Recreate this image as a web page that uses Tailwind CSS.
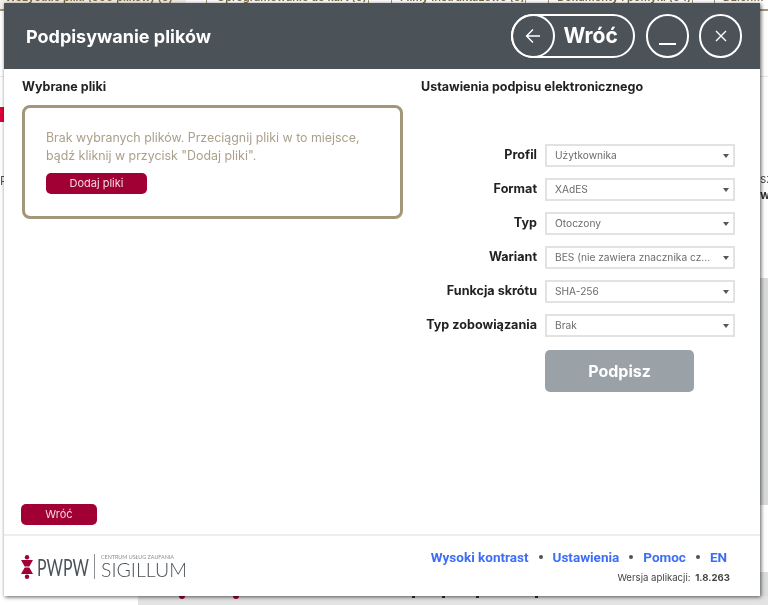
<!DOCTYPE html>
<html lang="pl">
<head>
<meta charset="utf-8">
<script src="https://cdn.jsdelivr.net/npm/@tailwindcss/browser@4"></script>
</head>
<body class="bg-white">
<div class="relative w-[768px] h-[605px] overflow-hidden bg-white font-['Inter',sans-serif] blur-[0.35px]">
  <!-- page behind the dialog -->
  <div class="absolute left-0 top-0 w-full h-[11px] border-b-2 border-[#a39779] flex text-[11px] leading-[11px] text-[#7a6a45] font-semibold overflow-hidden">
    <span class="w-[190px] pl-[5px] pt-[0px] -mt-[8px] h-[30px] bg-[#f3f0e8] truncate">Wszystkie pliki (000 plików) (0)</span>
    <span class="ml-[20px] w-[167px] pl-[10px] -mt-[8px] h-[30px] border-x border-[#a39779] truncate">Oprogramowanie do kart (0)</span>
    <span class="ml-[22px] w-[138px] pl-[8px] -mt-[8px] h-[30px] border-x border-[#a39779] truncate">Filmy instruktażowe (0)</span>
    <span class="ml-[22px] w-[148px] pl-[8px] -mt-[8px] h-[30px] border-x border-[#a39779] truncate">Dokumenty i pomyki (04)</span>
    <span class="ml-[21px] pl-[8px] -mt-[8px] h-[30px] border-l border-[#a39779] truncate">Dziennik</span>
  </div>
  <div class="absolute left-0 top-[76px] w-full h-px bg-[#e8e8e8]"></div>
  <div class="absolute left-0 top-[107px] w-[4px] h-[15px] bg-[#e0003c]"></div>
  <div class="absolute left-0 top-[172px] text-[12px] text-[#555]">P</div>
  <div class="absolute left-[760px] top-[170px] text-[12px] text-[#555]">sz</div>
  <div class="absolute left-[760px] top-[186px] text-[12px] font-bold text-[#333]">ws</div>
  <div class="absolute left-[760px] top-[278px] w-[8px] h-[227px] bg-[#d8dada]"></div>
  <div class="absolute left-[760px] top-[572px] w-[8px] h-[33px] bg-[#dcdddd]"></div>
  <div class="absolute left-[138px] top-[596px] w-[630px] h-[9px] bg-[#e3e3e3]">
    <span class="absolute left-[41px] top-[-1px] w-[6px] h-[4px] rounded-b-full bg-[#a10035]"></span>
    <span class="absolute left-[95px] top-[-1px] w-[6px] h-[4px] rounded-b-full bg-[#a10035]"></span>
    <span class="absolute left-[274px] top-0 w-[3px] h-[2px] bg-[#333]"></span>
    <span class="absolute left-[304px] top-0 w-[3px] h-[2px] bg-[#333]"></span>
    <span class="absolute left-[338px] top-0 w-[3px] h-[2px] bg-[#333]"></span>
    <span class="absolute left-[397px] top-0 w-[3px] h-[2px] bg-[#333]"></span>
  </div>

  <!-- dialog -->
  <div class="absolute left-[4px] top-[3px] w-[756px] h-[593px] bg-white flex flex-col shadow-[1px_1px_4px_rgba(0,0,0,0.65)]">
    <header class="h-[66px] shrink-0 bg-[#4b5258] flex items-center pl-[22px] pr-[18px] text-white">
      <h1 class="text-[18px] font-bold flex-1">Podpisywanie plików</h1>
      <div class="w-[124px] h-[44px] rounded-full border-[2.5px] border-white flex items-center">
        <span class="w-[44px] h-[44px] -ml-[2.5px] rounded-full border-[2.5px] border-white flex items-center justify-center shrink-0">
          <svg width="16" height="16" viewBox="0 0 16 16" fill="none" stroke="white" stroke-width="1.4"><path d="M15 8H1.5M8 1.5 1.5 8 8 14.5"/></svg>
        </span>
        <span class="text-[21px] font-bold ml-[9px]">Wróć</span>
      </div>
      <div class="ml-[11px] w-[43px] h-[44px] rounded-full border-[2.5px] border-white flex items-center justify-center">
        <span class="w-[17px] h-[2px] bg-white mt-[16px]"></span>
      </div>
      <div class="ml-[10px] w-[43px] h-[44px] rounded-full border-[2.5px] border-white flex items-center justify-center">
        <svg width="14" height="14" viewBox="0 0 14 14" fill="none" stroke="white" stroke-width="1.4"><path d="M2 2l10 10M12 2 2 12"/></svg>
      </div>
    </header>

    <main class="flex-1 flex flex-col pl-[18px] pr-[25px]">
      <div class="flex flex-1">
        <section class="w-[381px] pt-[9px]">
          <h2 class="text-[12.5px] leading-[18px] font-bold text-[#222]">Wybrane pliki</h2>
          <div class="mt-[9px] -ml-[0.5px] h-[114px] rounded-[8px] border-[3px] border-[#a39779] pl-[21.5px] pt-[21px]">
            <p class="text-[12.4px] leading-[18px] text-[#ab9f8b] w-[320px]">Brak wybranych plików. Przeciągnij pliki w to miejsce, bądź kliknij w przycisk "Dodaj pliki".</p>
            <button class="mt-[8px] block w-[101px] h-[21px] rounded-[5px] bg-[#a10035] text-[11px] text-[#f0d8df]">Dodaj pliki</button>
          </div>
        </section>
        <section class="ml-[18px] flex-1 pt-[9px]">
          <h2 class="text-[12.5px] leading-[18px] font-bold text-[#222]">Ustawienia podpisu elektronicznego</h2>
          <div class="mt-[48px] grid grid-cols-[116px_190px] gap-x-[8px] gap-y-[11px] items-center">
            <label class="text-right text-[12.6px] font-bold text-[#222]">Profil</label>
            <div class="h-[23px] border-2 border-[#e2e2e2] flex items-center justify-between pl-[8px] pr-[4px] text-[10.2px] text-[#6b6b6b]"><span>Użytkownika</span><span class="w-0 h-0 border-x-[3.5px] border-x-transparent border-t-[4px] border-t-[#555]"></span></div>
            <label class="text-right text-[12.6px] font-bold text-[#222]">Format</label>
            <div class="h-[23px] border-2 border-[#e2e2e2] flex items-center justify-between pl-[8px] pr-[4px] text-[10.2px] text-[#6b6b6b]"><span>XAdES</span><span class="w-0 h-0 border-x-[3.5px] border-x-transparent border-t-[4px] border-t-[#555]"></span></div>
            <label class="text-right text-[12.6px] font-bold text-[#222]">Typ</label>
            <div class="h-[23px] border-2 border-[#e2e2e2] flex items-center justify-between pl-[8px] pr-[4px] text-[10.2px] text-[#6b6b6b]"><span>Otoczony</span><span class="w-0 h-0 border-x-[3.5px] border-x-transparent border-t-[4px] border-t-[#555]"></span></div>
            <label class="text-right text-[12.6px] font-bold text-[#222]">Wariant</label>
            <div class="h-[23px] border-2 border-[#e2e2e2] flex items-center justify-between pl-[8px] pr-[4px] text-[10.2px] text-[#6b6b6b]"><span>BES (nie zawiera znacznika cz...</span><span class="w-0 h-0 border-x-[3.5px] border-x-transparent border-t-[4px] border-t-[#555]"></span></div>
            <label class="text-right text-[12.6px] font-bold text-[#222]">Funkcja skrótu</label>
            <div class="h-[23px] border-2 border-[#e2e2e2] flex items-center justify-between pl-[8px] pr-[4px] text-[10.2px] text-[#6b6b6b]"><span>SHA-256</span><span class="w-0 h-0 border-x-[3.5px] border-x-transparent border-t-[4px] border-t-[#555]"></span></div>
            <label class="text-right text-[12.6px] font-bold text-[#222]">Typ zobowiązania</label>
            <div class="h-[23px] border-2 border-[#e2e2e2] flex items-center justify-between pl-[8px] pr-[4px] text-[10.2px] text-[#6b6b6b]"><span>Brak</span><span class="w-0 h-0 border-x-[3.5px] border-x-transparent border-t-[4px] border-t-[#555]"></span></div>
            <div></div>
            <button class="mt-[2px] w-[149px] h-[42px] rounded-[5px] bg-[#9aa1a7] text-white text-[16px] font-bold">Podpisz</button>
          </div>
        </section>
      </div>
      <button class="mb-[9px] ml-[-1px] w-[76px] h-[21px] rounded-[5px] bg-[#a10035] text-[11px] text-[#f0d8df]">Wróć</button>
    </main>

    <footer class="h-[62px] shrink-0 border-t-2 border-[#eeeeee] flex justify-between pl-[17px] pr-[30px]">
      <div class="flex items-center mt-[1px] text-[#4b5258]">
        <svg width="12" height="26" viewBox="0 0 13 26" fill="#a10035"><circle cx="6.5" cy="2.5" r="2.4"/><path d="M0 5.5h13L9 12.5H4zM4 13.5h5l4 7H0z"/><circle cx="6.5" cy="23.5" r="2.4"/></svg>
        <span class="ml-[4px] w-[51px] text-[24px] font-['Lato'] font-normal leading-none inline-block origin-left scale-x-[0.66]">PWPW</span>
        <span class="ml-[6px] w-[1px] h-[25px] bg-[#8a9095]"></span>
        <div class="ml-[6px] flex flex-col">
          <span class="text-[5.4px] leading-[6px] text-[#8a9095] font-['Lato']">CENTRUM USŁUG ZAUFANIA</span>
          <span class="text-[19.5px] leading-[20px] font-['Lato'] font-light">SIGILLUM</span>
        </div>
      </div>
      <div class="flex flex-col items-end pt-[12px]">
        <nav class="flex items-center font-['Roboto'] font-bold text-[13.5px] leading-[18px] text-[#3d6ef5] pr-[3px]">
          <a>Wysoki kontrast</a><span class="mx-[10px] w-[4px] h-[4px] rounded-full bg-[#4b5258]"></span><a>Ustawienia</a><span class="mx-[10px] w-[4px] h-[4px] rounded-full bg-[#4b5258]"></span><a>Pomoc</a><span class="mx-[10px] w-[4px] h-[4px] rounded-full bg-[#4b5258]"></span><a>EN</a>
        </nav>
        <p class="mt-[5px] text-[9.6px] leading-[14px] text-[#444]">Wersja aplikacji: <b class="ml-[2px] font-bold">1.8.263</b></p>
      </div>
    </footer>
  </div>
</div>
</body>
</html>
